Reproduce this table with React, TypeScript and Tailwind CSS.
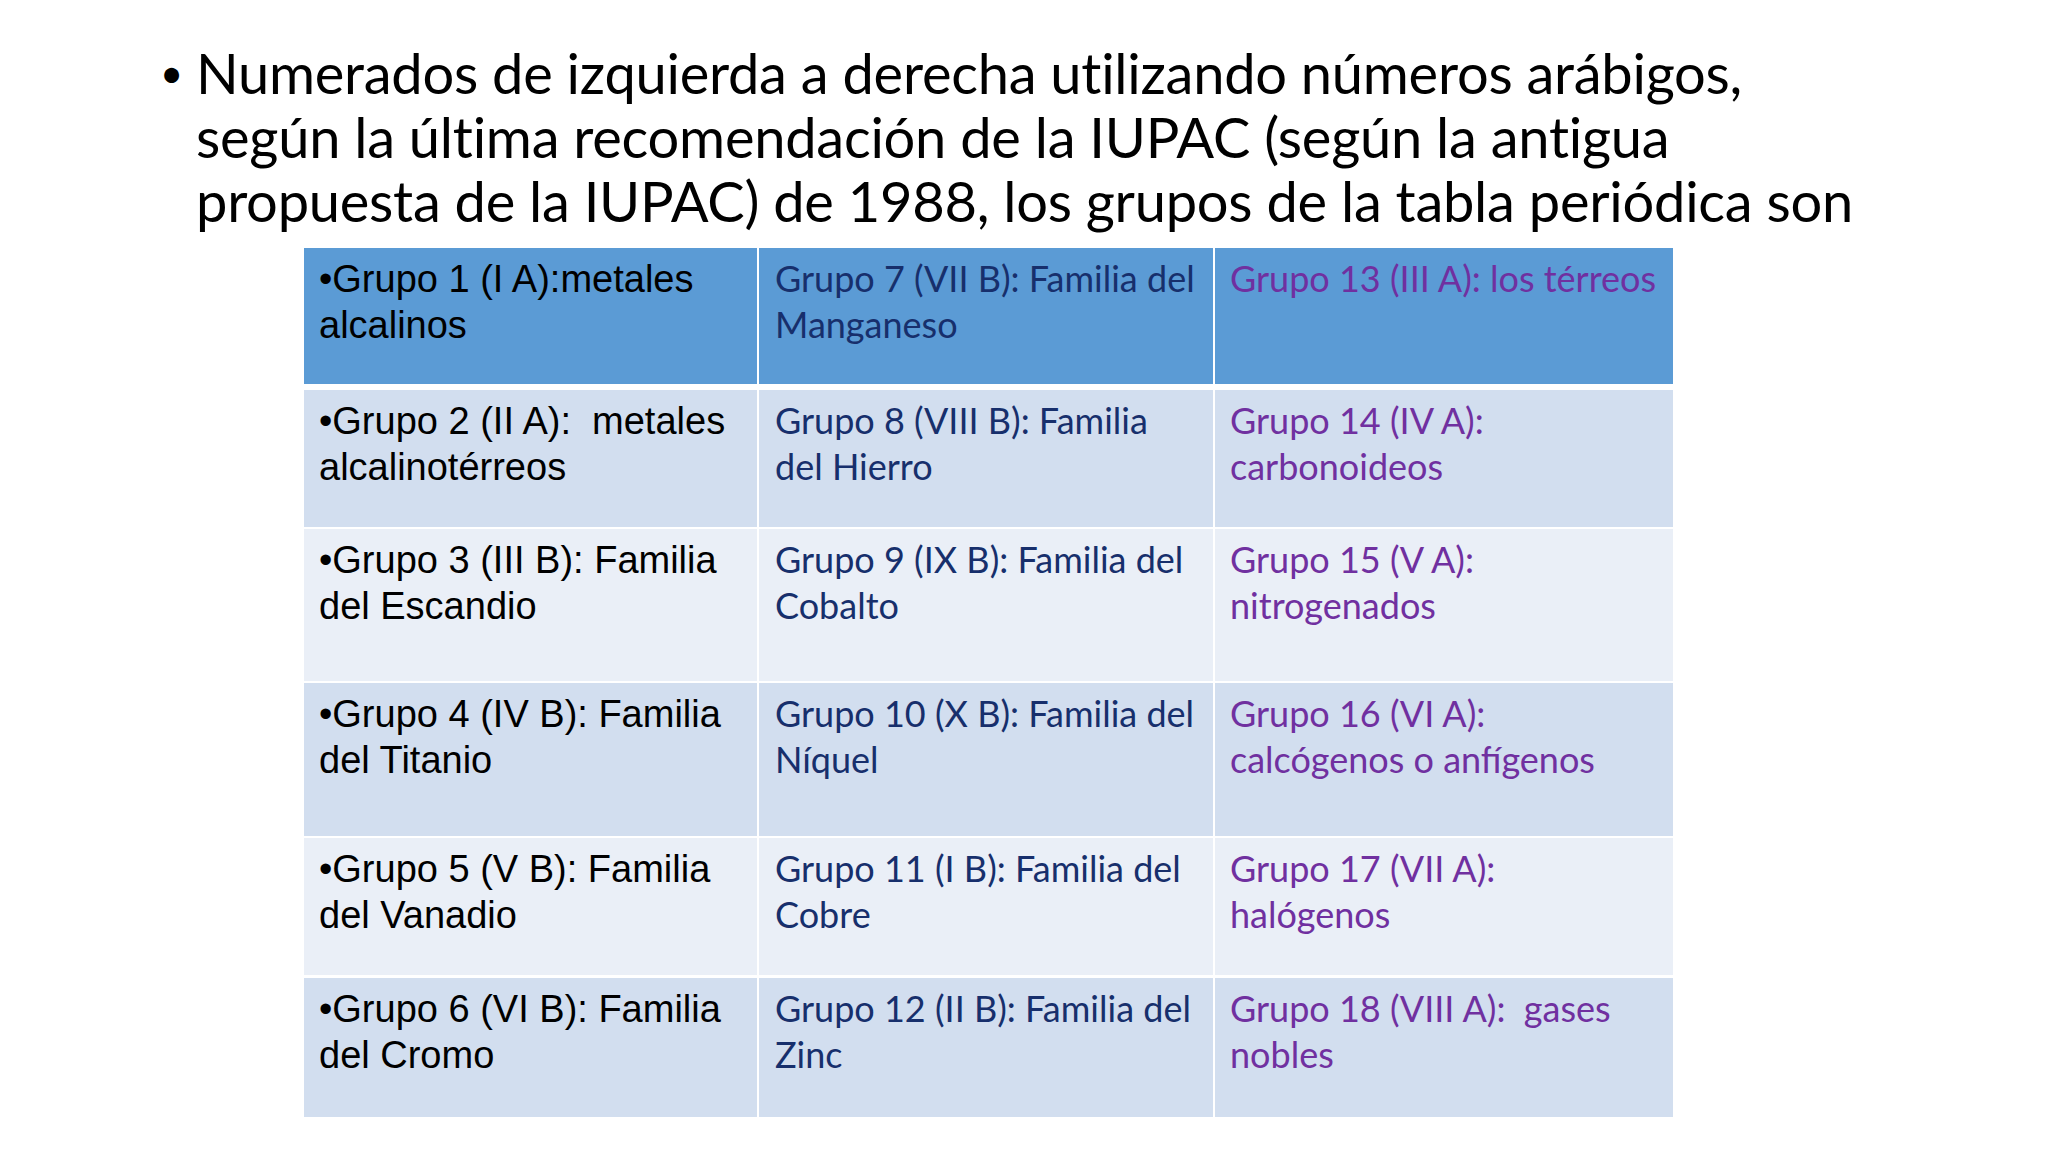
const rows = [
  {
    h: "h-[136px]",
    bg: "bg-[#5b9bd5]",
    cells: [
      ["•Grupo 1 (I A):metales", "alcalinos"],
      ["Grupo 7 (VII B): Familia del", "Manganeso"],
      ["Grupo 13 (III A): los térreos"],
    ],
  },
  {
    h: "h-[137px]",
    bg: "bg-[#d2deef]",
    cells: [
      ["•Grupo 2 (II A):  metales", "alcalinotérreos"],
      ["Grupo 8 (VIII B): Familia", "del Hierro"],
      ["Grupo 14 (IV A):", "carbonoideos"],
    ],
  },
  {
    h: "h-[152px]",
    bg: "bg-[#eaeff7]",
    cells: [
      ["•Grupo 3 (III B): Familia", "del Escandio"],
      ["Grupo 9 (IX B): Familia del", "Cobalto"],
      ["Grupo 15 (V A):", "nitrogenados"],
    ],
  },
  {
    h: "h-[153px]",
    bg: "bg-[#d2deef]",
    cells: [
      ["•Grupo 4 (IV B): Familia", "del Titanio"],
      ["Grupo 10 (X B): Familia del", "Níquel"],
      ["Grupo 16 (VI A):", "calcógenos o anfígenos"],
    ],
  },
  {
    h: "h-[137px]",
    bg: "bg-[#eaeff7]",
    cells: [
      ["•Grupo 5 (V B): Familia", "del Vanadio"],
      ["Grupo 11 (I B): Familia del", "Cobre"],
      ["Grupo 17 (VII A):", "halógenos"],
    ],
  },
  {
    h: "h-[139px]",
    bg: "bg-[#d2deef]",
    cells: [
      ["•Grupo 6 (VI B): Familia", "del Cromo"],
      ["Grupo 12 (II B): Familia del", "Zinc"],
      ["Grupo 18 (VIII A):  gases", "nobles"],
    ],
  },
];

const calibri = "font-['Lato','Open_Sans',sans-serif]";

export default function App() {
  return (
    <div className="h-[1152px] w-[2048px] overflow-hidden bg-white">
      {/* título con viñeta */}
      <div className="flex pl-[160px] pt-[41px] text-[56px] leading-[64px] text-black">
        <span className={`${calibri} w-[36px] text-[40px]`}>•</span>
        <div className={`${calibri} whitespace-pre tracking-[-0.25px]`}>
          <div>Numerados de izquierda a derecha utilizando números arábigos,</div>
          <div>según la última recomendación de la IUPAC (según la antigua</div>
          <div>propuesta de la IUPAC) de 1988, los grupos de la tabla periódica son</div>
        </div>
      </div>

      {/* tabla de grupos */}
      <div className="ml-[304px] mt-[15px] flex w-[1369px] flex-col">
        {rows.map((row, i) => (
          <div
            key={i}
            className={`grid grid-cols-[453px_454px_458px] gap-x-[2px] ${row.h} ${
              i === 0 ? "mb-[6px]" : i === 4 ? "mb-[3px]" : "mb-[2px]"
            }`}
          >
            {row.cells.map((lines, j) => (
              <div
                key={j}
                className={`${row.bg} whitespace-pre ${
                  j === 0
                    ? "pl-[15px] pt-[8px] font-['Liberation_Sans',Arial,sans-serif] text-[38px] leading-[46px] text-black"
                    : j === 1
                      ? `${calibri} pl-[16px] pt-[7px] text-[36px] leading-[46px] text-[#172f6c]`
                      : `${calibri} pl-[15px] pt-[7px] text-[36px] leading-[46px] text-[#7030a0]`
                }`}
              >
                {lines.map((l, k) => (
                  <div key={k}>{l}</div>
                ))}
              </div>
            ))}
          </div>
        ))}
      </div>
    </div>
  );
}
